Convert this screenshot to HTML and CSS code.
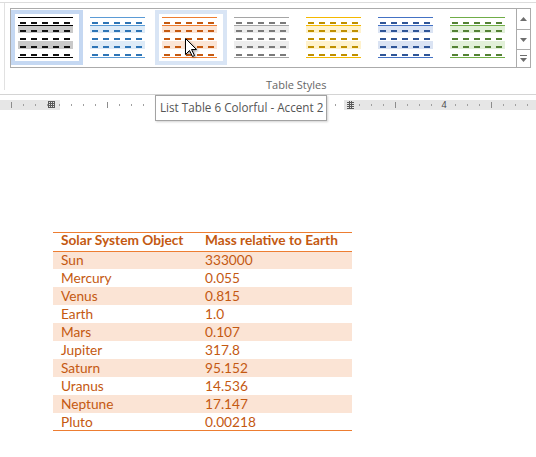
FILE: index.html
```html
<!DOCTYPE html>
<html>
<head>
<meta charset="utf-8">
<link rel="stylesheet" href="styles.css">
</head>
<body>
<div class="ribbon">
  <div class="group">
    <div class="gallery">
      <div class="thumbs">
        <div class="cell selected t-black"><div class="inner"><svg class="thumb" width="55" height="41" viewBox="0 0 55 41"><rect class="b" x="0" y="8" width="55" height="8"/><rect class="b" x="0" y="24" width="55" height="8"/><line class="l" x1="0" x2="55" y1="0.5" y2="0.5"/><line class="l" x1="0" x2="55" y1="8.5" y2="8.5"/><line class="l" x1="0" x2="55" y1="40.5" y2="40.5"/><line class="d" x1="2" x2="53" y1="6" y2="6"/><line class="d" x1="2" x2="53" y1="14" y2="14"/><line class="d" x1="2" x2="53" y1="22" y2="22"/><line class="d" x1="2" x2="53" y1="30" y2="30"/><line class="d" x1="2" x2="53" y1="38" y2="38"/></svg></div></div>
        <div class="cell t-blue"><div class="inner"><svg class="thumb" width="55" height="41" viewBox="0 0 55 41"><rect class="b" x="0" y="8" width="55" height="8"/><rect class="b" x="0" y="24" width="55" height="8"/><line class="l" x1="0" x2="55" y1="0.5" y2="0.5"/><line class="l" x1="0" x2="55" y1="8.5" y2="8.5"/><line class="l" x1="0" x2="55" y1="40.5" y2="40.5"/><line class="d" x1="2" x2="53" y1="6" y2="6"/><line class="d" x1="2" x2="53" y1="14" y2="14"/><line class="d" x1="2" x2="53" y1="22" y2="22"/><line class="d" x1="2" x2="53" y1="30" y2="30"/><line class="d" x1="2" x2="53" y1="38" y2="38"/></svg></div></div>
        <div class="cell hover t-orange"><div class="inner"><svg class="thumb" width="55" height="41" viewBox="0 0 55 41"><rect class="b" x="0" y="8" width="55" height="8"/><rect class="b" x="0" y="24" width="55" height="8"/><line class="l" x1="0" x2="55" y1="0.5" y2="0.5"/><line class="l" x1="0" x2="55" y1="8.5" y2="8.5"/><line class="l" x1="0" x2="55" y1="40.5" y2="40.5"/><line class="d" x1="2" x2="53" y1="6" y2="6"/><line class="d" x1="2" x2="53" y1="14" y2="14"/><line class="d" x1="2" x2="53" y1="22" y2="22"/><line class="d" x1="2" x2="53" y1="30" y2="30"/><line class="d" x1="2" x2="53" y1="38" y2="38"/></svg></div></div>
        <div class="cell t-grey"><div class="inner"><svg class="thumb" width="55" height="41" viewBox="0 0 55 41"><rect class="b" x="0" y="8" width="55" height="8"/><rect class="b" x="0" y="24" width="55" height="8"/><line class="l" x1="0" x2="55" y1="0.5" y2="0.5"/><line class="l" x1="0" x2="55" y1="8.5" y2="8.5"/><line class="l" x1="0" x2="55" y1="40.5" y2="40.5"/><line class="d" x1="2" x2="53" y1="6" y2="6"/><line class="d" x1="2" x2="53" y1="14" y2="14"/><line class="d" x1="2" x2="53" y1="22" y2="22"/><line class="d" x1="2" x2="53" y1="30" y2="30"/><line class="d" x1="2" x2="53" y1="38" y2="38"/></svg></div></div>
        <div class="cell t-gold"><div class="inner"><svg class="thumb" width="55" height="41" viewBox="0 0 55 41"><rect class="b" x="0" y="8" width="55" height="8"/><rect class="b" x="0" y="24" width="55" height="8"/><line class="l" x1="0" x2="55" y1="0.5" y2="0.5"/><line class="l" x1="0" x2="55" y1="8.5" y2="8.5"/><line class="l" x1="0" x2="55" y1="40.5" y2="40.5"/><line class="d" x1="2" x2="53" y1="6" y2="6"/><line class="d" x1="2" x2="53" y1="14" y2="14"/><line class="d" x1="2" x2="53" y1="22" y2="22"/><line class="d" x1="2" x2="53" y1="30" y2="30"/><line class="d" x1="2" x2="53" y1="38" y2="38"/></svg></div></div>
        <div class="cell t-navy"><div class="inner"><svg class="thumb" width="55" height="41" viewBox="0 0 55 41"><rect class="b" x="0" y="8" width="55" height="8"/><rect class="b" x="0" y="24" width="55" height="8"/><line class="l" x1="0" x2="55" y1="0.5" y2="0.5"/><line class="l" x1="0" x2="55" y1="8.5" y2="8.5"/><line class="l" x1="0" x2="55" y1="40.5" y2="40.5"/><line class="d" x1="2" x2="53" y1="6" y2="6"/><line class="d" x1="2" x2="53" y1="14" y2="14"/><line class="d" x1="2" x2="53" y1="22" y2="22"/><line class="d" x1="2" x2="53" y1="30" y2="30"/><line class="d" x1="2" x2="53" y1="38" y2="38"/></svg></div></div>
        <div class="cell t-green"><div class="inner"><svg class="thumb" width="55" height="41" viewBox="0 0 55 41"><rect class="b" x="0" y="8" width="55" height="8"/><rect class="b" x="0" y="24" width="55" height="8"/><line class="l" x1="0" x2="55" y1="0.5" y2="0.5"/><line class="l" x1="0" x2="55" y1="8.5" y2="8.5"/><line class="l" x1="0" x2="55" y1="40.5" y2="40.5"/><line class="d" x1="2" x2="53" y1="6" y2="6"/><line class="d" x1="2" x2="53" y1="14" y2="14"/><line class="d" x1="2" x2="53" y1="22" y2="22"/><line class="d" x1="2" x2="53" y1="30" y2="30"/><line class="d" x1="2" x2="53" y1="38" y2="38"/></svg></div></div>
      </div>
      <div class="scroll">
        <div class="sbtn up"><svg width="7" height="4" viewBox="0 0 7 4"><path d="M0 4 L3.5 0 L7 4 Z"/></svg></div>
        <div class="sbtn down"><svg width="7" height="4" viewBox="0 0 7 4"><path d="M0 0 L7 0 L3.5 4 Z"/></svg></div>
        <div class="sbtn more"><svg width="7" height="7" viewBox="0 0 7 7"><rect x="0" y="0" width="7" height="1"/><path d="M0 3 L7 3 L3.5 7 Z"/></svg></div>
      </div>
    </div>
    <div class="group-label">Table Styles</div>
  </div>
</div>

<div class="ruler">
  <svg class="handle h1" width="7" height="7" viewBox="0 0 7 7"><path d="M0 0h7v1H0zM0 2h7v1H0zM0 4h7v1H0zM0 6h7v1H0zM0 0h1v7H0zM2 0h1v7H2zM4 0h1v7H4zM6 0h1v7H6z"/></svg>
  <svg class="handle h2" width="7" height="8" viewBox="0 0 7 8"><path d="M2 0h1v8H2zM4 0h1v8H4zM0 1h7v1H0zM0 3h7v1H0zM0 5h7v1H0zM0 7h7v1H0z"/></svg>
  <span class="rnum">4</span>
</div>

<div class="doc">
  <table class="solar">
    <colgroup><col class="c1"><col class="c2"></colgroup>
    <thead>
      <tr><th>Solar System Object</th><th>Mass relative to Earth</th></tr>
    </thead>
    <tbody>
      <tr><td>Sun</td><td>333000</td></tr>
      <tr><td>Mercury</td><td>0.055</td></tr>
      <tr><td>Venus</td><td>0.815</td></tr>
      <tr><td>Earth</td><td>1.0</td></tr>
      <tr><td>Mars</td><td>0.107</td></tr>
      <tr><td>Jupiter</td><td>317.8</td></tr>
      <tr><td>Saturn</td><td>95.152</td></tr>
      <tr><td>Uranus</td><td>14.536</td></tr>
      <tr><td>Neptune</td><td>17.147</td></tr>
      <tr><td>Pluto</td><td>0.00218</td></tr>
    </tbody>
  </table>
</div>

<div class="tooltip">List Table 6 Colorful - Accent 2</div>
<svg class="cursor" width="14" height="21" viewBox="0 0 14 21"><path d="M0.5 0.5 L0.5 16.5 L4.5 12.5 L7.5 18.5 L9.5 17.5 L6.5 11.5 L11.5 11.5 Z"/></svg>
</body>
</html>
```

FILE: styles.css
```css
html, body {
  margin: 0;
  background: #fff;
}
body {
  width: 536px;
  height: 457px;
  overflow: hidden;
  position: relative;
  font-family: "Open Sans", "Noto Sans", sans-serif;
}

/* Ribbon */
.ribbon {
  margin-top: 2px;
  border-top: 1px solid #dcdcdc;
  border-bottom: 1px solid #d4d4d4;
  height: 91px;
}
.group {
  margin-left: 4px;
  border-left: 1px solid #e1e1e1;
  height: 82px;
  padding: 5px 0 0 5px;
}
.gallery {
  display: flex;
  width: 519px;
  height: 58px;
  border: 1px solid #ababab;
}
.thumbs {
  display: flex;
  width: 505px;
  padding-top: 1px;
}
.cell {
  width: 72px;
  height: 55px;
  padding: 4px;
  box-sizing: border-box;
}
.cell.selected { background: #c5d8f2; }
.cell.hover { background: #d9e5f5; }
.inner {
  background: #fff;
  height: 100%;
  padding: 3px;
  box-sizing: border-box;
}
.thumb { display: block; }
.thumb .b { fill: var(--band); }
.thumb .l { stroke: var(--line); stroke-width: 1; }
.thumb .d { stroke: var(--dash); stroke-width: 2; stroke-dasharray: 6 5; }

.t-black  { --line: #000; --band: #c9c9c9; --dash: #111; }
.t-blue   { --line: #5b9bd5; --band: #deebf7; --dash: #2e75b6; }
.t-orange { --line: #ed7d31; --band: #fbe5d6; --dash: #c55a11; }
.t-grey   { --line: #a5a5a5; --band: #ededed; --dash: #7b7b7b; }
.t-gold   { --line: #f5b800; --band: #fff2cc; --dash: #bf9000; }
.t-navy   { --line: #4472c4; --band: #dae3f3; --dash: #2f5597; }
.t-green  { --line: #70ad47; --band: #e2f0d9; --dash: #548235; }

.scroll {
  width: 13px;
  border-left: 1px solid #ababab;
  display: flex;
  flex-direction: column;
}
.sbtn {
  display: flex;
  align-items: center;
  justify-content: center;
  fill: #6d6d6d;
}
.sbtn svg { display: block; }
.sbtn.up { height: 20px; border-bottom: 1px solid #ababab; }
.sbtn.down { height: 19px; border-bottom: 1px solid #ababab; }
.sbtn.more { flex: 1; }

.group-label {
  margin: 10px 0 0 256px;
  font-size: 11px;
  line-height: 14px;
  color: #666;
  white-space: nowrap;
}

/* Ruler */
.ruler {
  position: relative;
  margin-top: 5px;
  height: 10px;
  background:
    repeating-linear-gradient(90deg, transparent 0 11px, #8d8d8d 11px 12px, transparent 12px 96px) 0 2px / 100% 6px no-repeat,
    repeating-linear-gradient(90deg, transparent 0 11px, #a0a0a0 11px 12px) 0 4px / 100% 2px no-repeat,
    linear-gradient(90deg, #e6e6e6 0 60px, #fff 60px 344px, #e6e6e6 344px);
}
.handle {
  position: absolute;
  display: block;
  fill: #5a5a5a;
}
.h1 { left: 48px; top: 1px; background: #e6e6e6; }
.h2 { left: 347px; top: 1px; background: #e6e6e6; }
.rnum {
  position: absolute;
  left: 440px;
  top: 0;
  width: 8px;
  height: 10px;
  background: #e6e6e6;
  font-family: "Open Sans", sans-serif;
  font-size: 9px;
  line-height: 10px;
  text-align: center;
  color: #444;
}

/* Document */
.doc {
  padding: 122px 0 0 53px;
}
.solar {
  border-collapse: separate;
  border-spacing: 0;
  table-layout: fixed;
  width: 299px;
  font-family: Lato, "Liberation Sans", sans-serif;
  font-size: 13.7px;
  color: #c45911;
}
.c1 { width: 144px; }
.solar th {
  text-align: left;
  font-weight: bold;
  border-top: 1px solid #ed7d31;
  border-bottom: 1px solid #ed7d31;
  line-height: 14px;
  padding: 0 0 4px 8px;
  vertical-align: top;
  white-space: nowrap;
}
.solar td {
  line-height: 18px;
  padding: 0 0 0 8px;
  vertical-align: top;
  white-space: nowrap;
}
.solar tbody tr:nth-child(odd) td { background: #fbe4d5; }
.solar tbody tr:first-child td { line-height: 15px; padding-bottom: 2px; }
.solar tbody tr:last-child td { line-height: 17px; border-bottom: 1px solid #ed7d31; }

/* Overlays */
.tooltip {
  position: absolute;
  left: 155px;
  top: 95px;
  width: 172px;
  height: 26px;
  box-sizing: border-box;
  border: 1px solid #a3a3a3;
  background: #fff;
  box-shadow: 1px 1px 2px rgba(0, 0, 0, 0.18);
  padding-left: 4px;
  font-size: 11.7px;
  line-height: 22px;
  color: #555;
  white-space: nowrap;
}
.cursor {
  position: absolute;
  left: 185px;
  top: 38px;
  fill: #fff;
  stroke: #000;
  stroke-width: 1;
  filter: drop-shadow(1px 1px 1px rgba(0, 0, 0, 0.4));
}
```
